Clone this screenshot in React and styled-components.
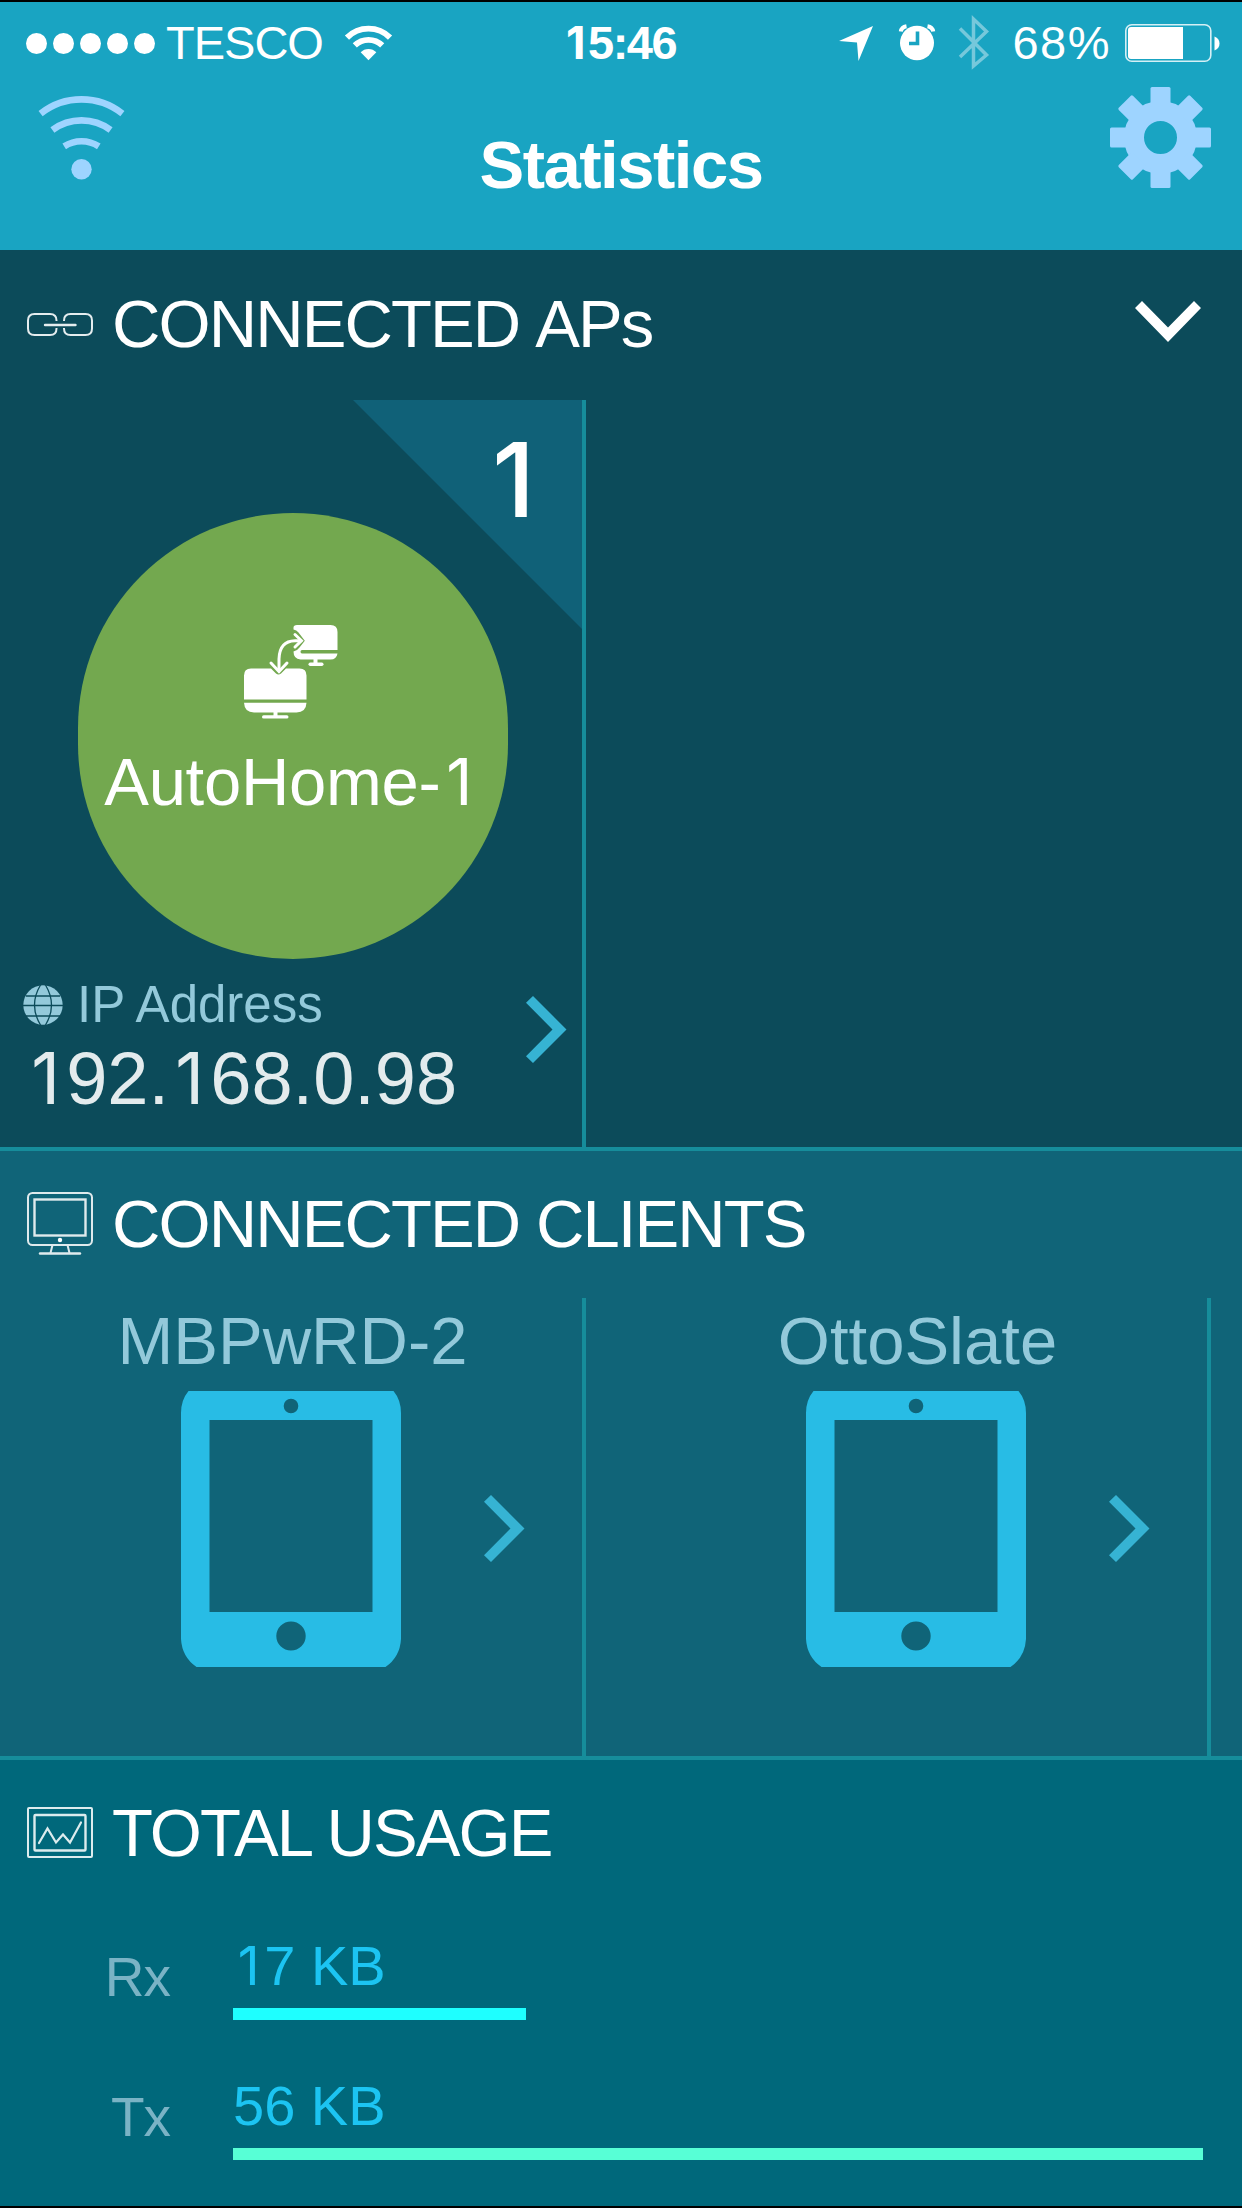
import React from "react";
import styled, { createGlobalStyle } from "styled-components";

const GlobalStyle = createGlobalStyle`
  body {
    margin: 0;
    background: #000000;
  }
  * {
    box-sizing: border-box;
  }
`

const Screen = styled.div`
  display: flex;
  flex-direction: column;
  width: 1242px;
  height: 2208px;
  border-top: 2px solid #000000;
  border-bottom: 2px solid #000000;
  overflow: hidden;
  color: #ffffff;
  font-family: "Liberation Sans", Arial, sans-serif;
  white-space: nowrap;
`

const Icon = styled.svg`
  display: block;
  flex: none;
  overflow: visible;
`

const Header = styled.header`
  height: 248px;
  background: #19a4c2;
`

const StatusBar = styled.div`
  display: grid;
  grid-template-columns: 1fr auto 1fr;
  align-items: center;
  height: 82px;
  padding: 0 22px 0 18px;
  font-size: 47px;
  line-height: 80px;
`

const StatusLeft = styled.div`
  display: flex;
  align-items: center;
  padding-left: 8px;
`

const StatusRight = styled.div`
  display: flex;
  align-items: center;
  justify-content: flex-end;
`

const Signal = styled.div`
  display: flex;
  gap: 6px;
  margin-right: 11px;
`

const Dot = styled.span`
  width: 21px;
  height: 21px;
  border-radius: 50%;
  background: #ffffff;
`

const Carrier = styled.span`
  margin-right: 22px;
  letter-spacing: -1px;
`

const Clock = styled.span`
  font-weight: 700;
  letter-spacing: -1.5px;
`

const Percent = styled.span`
  margin: 0 14px 0 23px;
  letter-spacing: 1.5px;
`

const NavBar = styled.div`
  display: grid;
  grid-template-columns: 1fr auto 1fr;
  align-items: start;
  padding: 3px 31px 0;
`

const NavButton = styled.button`
  justify-self: ${props => props.$end ? "end" : "start"};
  margin: ${props => props.$end ? "0" : "10px 0 0 8px"};
  padding: 0;
  border: 0;
  background: none;
  color: #9ed4ff;
  cursor: pointer;
`

const Title = styled.h1`
  margin: 38px 0 0;
  font-size: 67px;
  line-height: 80px;
  font-weight: 700;
  letter-spacing: -1.5px;
`

const Section = styled.section`
  height: ${props => props.$height}px;
  background: ${props => props.$color};
  border-bottom: ${props => props.$last ? "0" : "4px solid #168d9b"};
`

const SectionHeader = styled.div`
  display: flex;
  align-items: center;
  height: ${props => props.$height || 147}px;
  padding: 0 41px 2px 27px;
`

const SectionTitle = styled.h2`
  flex: 1;
  margin: 0 0 0 19px;
  font-size: 67px;
  line-height: 80px;
  font-weight: 400;
  letter-spacing: -1.9px;
  word-spacing: ${props => props.$gap || 0}px;
`

const Toggle = styled.button`
  margin-bottom: 6px;
  padding: 0;
  border: 0;
  background: none;
  color: #ffffff;
  cursor: pointer;
`

const Cards = styled.div`
  display: flex;
  gap: 39px;
  height: ${props => props.$height}px;
  overflow: hidden;
`

const Card = styled.div`
  position: relative;
  flex: none;
  width: 586px;
  border-right: 4px solid #168d9b;
`

const Corner = styled.div`
  position: absolute;
  top: 0;
  right: 0;
  width: 229px;
  height: 229px;
  padding-right: 47px;
  background: #106178;
  clip-path: polygon(0 0, 100% 0, 100% 100%);
  font-family: Inter, sans-serif;
  font-size: 103px;
  line-height: 159px;
  font-weight: 500;
  text-align: right;
`

const Circle = styled.div`
  position: relative;
  display: flex;
  flex-direction: column;
  align-items: center;
  width: 430px;
  height: 446px;
  margin: 113px 0 0 78px;
  padding: 112px 4px 0 0;
  border-radius: 215px;
  background: #73a84f;
`

const CircleName = styled.div`
  margin-top: 23px;
  font-size: 67px;
  line-height: 80px;
  letter-spacing: -0.3px;
`

const CardFooter = styled.div`
  display: flex;
  justify-content: space-between;
  align-items: flex-start;
  padding: 18px 15px 0 23px;
`

const IpLabel = styled.div`
  display: flex;
  align-items: center;
  gap: 14px;
  color: #93c9da;
  font-size: 51px;
  line-height: 56px;
`

const IpValue = styled.div`
  margin: 6px 0 0 2px;
  color: #e3ebed;
  font-size: 74px;
  line-height: 80px;
`

const OpenButton = styled.button`
  padding: 0;
  border: 0;
  background: none;
  color: #36b3d3;
  margin: ${props => props.$top || 0}px 0 ${props => props.$top ? 0 : 2}px;
  cursor: pointer;
`

const ClientName = styled.div`
  padding: 3px 0 0 3px;
  color: #93c9da;
  font-size: 67px;
  line-height: 80px;
  text-align: center;
`

const ClientBody = styled.div`
  display: flex;
  align-items: center;
  gap: 83px;
  padding: 10px 0 0 181px;
`

const Usage = styled.div`
  display: flex;
  flex-direction: column;
  gap: 56px;
  padding: 29px 39px 0 0;
  font-size: 56px;
  line-height: 60px;
`

const UsageRow = styled.div`
  display: grid;
  grid-template-columns: 170px 1fr;
  column-gap: 63px;
`

const UsageLabel = styled.div`
  padding-top: 11px;
  color: #7ab3c5;
  font-size: 55px;
  text-align: right;
  letter-spacing: -1px;
`

const UsageValue = styled.div`
  color: #1cc4f2;
`

const Bar = styled.div`
  height: 12px;
  margin-top: 12px;
  background: ${props => props.$color};
`

// plain "1" without the foot
const One = styled.span`
  display: inline-block;
  width: 0.58em;
  font-family: Inter, sans-serif;
  font-size: 0.96em;
  line-height: 1;
  text-align: center;
`

function Digits({ children }) {
  return children.split(/(1)/).map((part, i) => (
    part === "1" ? <One key={i}>1</One> : part
  ));
}

function StatusWifi() {
  return (
    <Icon width="47" height="36" viewBox="0 0 48 36">
      <g fill="none" stroke="#ffffff" strokeWidth="6">
        <path d="M2 12.5 A31 31 0 0 1 46 12.5" />
        <path d="M10 20.5 A20 20 0 0 1 38 20.5" />
      </g>
      <path d="M24 35.5 L16 27.5 A11 11 0 0 1 32 27.5 Z" fill="#ffffff" />
    </Icon>
  );
}

function WifiIcon() {
  return (
    <Icon width="85" height="83" viewBox="0 0 85 83">
      <g fill="none" stroke="currentColor" strokeWidth="6.6">
        <path d="M1.6 16.6 A66 66 0 0 1 83.4 16.6" />
        <path d="M13.4 33 A49 49 0 0 1 71.6 33" />
        <path d="M25.2 49.4 A32 32 0 0 1 59.8 49.4" />
      </g>
      <circle cx="42.5" cy="72.3" r="10.2" fill="currentColor" />
    </Icon>
  );
}

function GearIcon() {
  return (
    <Icon width="101" height="101" viewBox="-50.5 -50.5 101 101">
      <circle r="26.5" fill="none" stroke="currentColor" strokeWidth="20" />
      {[0, 45, 90, 135].map(angle => (
        <g key={angle} transform={`rotate(${angle})`} fill="currentColor">
          <rect x="-10" y="-50.5" width="20" height="20" rx="1.5" />
          <rect x="-10" y="30.5" width="20" height="20" rx="1.5" />
        </g>
      ))}
    </Icon>
  );
}

function StatusIcons() {
  return (
    <Icon width="150" height="56" viewBox="0 0 150 56">
      <path d="M34 11 L19.5 46 L18 27.5 L0 26 Z" fill="#ffffff" />
      <g>
        <ellipse cx="78" cy="28" rx="17" ry="17.3" fill="#ffffff" />
        <g fill="none" stroke="#ffffff" strokeWidth="4">
          <path d="M61.8 16.5 Q62.5 12 67.5 11.2" />
          <path d="M94.2 16.5 Q93.5 12 88.5 11.2" />
        </g>
        <path d="M78.5 16.5 V28.5 H70" fill="none" stroke="#19a4c2" strokeWidth="3.6" />
      </g>
      <path d="M121 13.5 L147.5 40 L134.5 51 V4 L147.5 16.5 L121 42" fill="none" stroke="#76c8db" strokeWidth="3.5" />
    </Icon>
  );
}

function BatteryIcon() {
  return (
    <Icon width="95" height="38" viewBox="0 0 95 38">
      <rect x="0.8" y="0.8" width="85" height="36.4" rx="6" fill="none" stroke="#d5eff5" strokeWidth="1.6" />
      <path d="M6 3 H58 V35 H6 Q3 35 3 32 V6 Q3 3 6 3 Z" fill="#ffffff" />
      <path d="M89.5 12.5 Q94.5 14.5 94.5 19.5 Q94.5 24.5 89.5 26.5 Z" fill="#ffffff" />
    </Icon>
  );
}

function LinkIcon() {
  return (
    <Icon width="66" height="23" viewBox="0 0 66 23">
      <g fill="none" stroke="#e5edef" strokeWidth="2">
        <path d="M29.5 8 V7.5 Q29.5 1 23 1 H7.5 Q1 1 1 7.5 V15.5 Q1 22 7.5 22 H23 Q29.5 22 29.5 15.5 V15" />
        <path d="M37 8 V7.5 Q37 1 43.5 1 H58.5 Q65 1 65 7.5 V15.5 Q65 22 58.5 22 H43.5 Q37 22 37 15.5 V15" />
        <path d="M18 12 H48.5" strokeWidth="2.4" strokeLinecap="round" />
      </g>
    </Icon>
  );
}

function MonitorIcon() {
  return (
    <Icon width="66" height="63" viewBox="0 0 66 63">
      <g fill="none" stroke="#dfeaed" strokeWidth="2">
        <rect x="1" y="1" width="64" height="52" rx="4.5" />
        <rect x="7.5" y="7.5" width="51" height="36" strokeWidth="2.4" />
        <path d="M25.5 53 L23.5 61 M40.5 53 L42.5 61" />
        <path d="M13 61.5 H53" strokeWidth="2.4" strokeLinecap="round" />
      </g>
      <circle cx="33" cy="48" r="2.2" fill="#ffffff" />
    </Icon>
  );
}

function ChartIcon() {
  return (
    <Icon width="66" height="51" viewBox="0 0 66 51">
      <g fill="none" stroke="#dcecee" strokeWidth="2">
        <rect x="1" y="1" width="64" height="49" rx="1" />
        <rect x="7.5" y="8" width="51" height="35.5" rx="1" strokeWidth="2.4" />
        <path d="M12 36 L20.5 21.5 L29 35.5 L36 27.5 L43 35.5 L54 15.5" strokeWidth="2.2" strokeLinecap="round" />
      </g>
    </Icon>
  );
}

function SyncIcon() {
  return (
    <Icon width="94" height="94" viewBox="0 0 94 94">
      <g fill="#ffffff">
        <path d="M49.5 4.5 V2.500 Q49.5 0 53 0 H86.5 Q93.500 0 93.5 7 V25 H58 Q56.5 25 56.5 26.7 Q56.5 28.400 58 28.4 H93.5 Q92.5 34.5 86.5 34.5 H56.5 Q49.5 34 49.5 26.5 Q53.500 25.500 55.5 22.500 L60.8 15.7 L54.5 7.500 Q52.500 5 49.5 4.5 Z" />
        <rect x="69.5" y="34" width="4" height="5" />
        <rect x="64.5" y="37.5" width="15" height="3.5" rx="1.700" />
        <path d="M0 74.5 V50.5 Q0 43.5 7 43.5 H27 L32 48.5 Q34.5 50.500 37 48.5 L42 43.5 H55.5 Q62.5 43.5 62.5 50.5 V74.5 Z" />
        <path d="M0 77.800 H62.5 Q62 87.5 52.5 87.5 H10 Q0.500 87.5 0 77.800 Z" />
        <rect x="29.5" y="87" width="4" height="5" />
        <rect x="18" y="90.2" width="26.5" height="3.400" rx="1.700" />
      </g>
      <path d="M35 46 V34 Q35.500 16 51 15.7 H57" fill="none" stroke="#ffffff" strokeWidth="3" />
      <path d="M27 38 L35 46.500 L43 38 M51 9.500 L57.5 15.7 L51 22" fill="none" stroke="#ffffff" strokeWidth="3" strokeLinecap="round" />
    </Icon>
  );
}

function GlobeIcon() {
  return (
    <Icon width="40" height="40" viewBox="0 0 40 40">
      <circle cx="20" cy="20" r="19.7" fill="currentColor" />
      <g fill="none" stroke="#0c4b5a" strokeWidth="1.3">
        <path d="M0 20.500 H40 M3 11 H37 M3 31 H37" />
        <path d="M17.500 0 Q5.500 20 17.500 40 M22.500 0 Q34.500 20 22.500 40" />
      </g>
    </Icon>
  );
}

function Chevron() {
  return (
    <Icon width="41" height="67" viewBox="0 0 41 67">
      <path d="M7 0 L40.5 33.5 L7 67 L0 60.3 L26.5 33.5 L0 6.7 Z" fill="currentColor" />
    </Icon>
  );
}

function ChevronDown() {
  return (
    <Icon width="66" height="41" viewBox="0 0 66 41">
      <path d="M0 7 L7 0 L33 26.5 L59 0 L66 7 L33 41 Z" fill="currentColor" />
    </Icon>
  );
}

function TabletIcon() {
  return (
    <Icon width="220" height="276" viewBox="0 0 220 276">
      <path
        fill="#28bce5"
        fillRule="evenodd"
        d="M7.5 0 H212.5 Q220 9 220 22 V248 Q219 266 204.5 276 H15.5 Q1 266 0 248 V22 Q0 9 7.5 0 Z
          M28.5 29 V221 H191.5 V29 Z
          M117.3 15 A7.3 7.3 0 1 0 102.7 15 A7.3 7.3 0 1 0 117.3 15 Z
          M124.7 245 A14.7 14.5 0 1 0 95.3 245 A14.7 14.5 0 1 0 124.7 245 Z"
      />
    </Icon>
  );
}

const clients = ["MBPwRD-2", "OttoSlate"];

const usage = [
  { label: "Rx", value: "17 KB", share: 30.2, color: "#1effff" },
  { label: "Tx", value: "56 KB", share: 100, color: "#57ffd6" },
];

export default function App() {
  return (
    <Screen>
      <GlobalStyle />
      <Header>
        <StatusBar>
          <StatusLeft>
            <Signal>
              {[0, 1, 2, 3, 4].map(i => <Dot key={i} />)}
            </Signal>
            <Carrier>TESCO</Carrier>
            <StatusWifi />
          </StatusLeft>
          <Clock><Digits>15:46</Digits></Clock>
          <StatusRight>
            <StatusIcons />
            <Percent>68%</Percent>
            <BatteryIcon />
          </StatusRight>
        </StatusBar>
        <NavBar>
          <NavButton aria-label="Wi-Fi"><WifiIcon /></NavButton>
          <Title>Statistics</Title>
          <NavButton $end aria-label="Settings"><GearIcon /></NavButton>
        </NavBar>
      </Header>

      <Section $height={901} $color="#0c4b5a">
        <SectionHeader $height={150}>
          <LinkIcon />
          <SectionTitle $gap={3}>CONNECTED APs</SectionTitle>
          <Toggle aria-label="Collapse"><ChevronDown /></Toggle>
        </SectionHeader>
        <Cards $height={747}>
          <Card>
            <Corner>1</Corner>
            <Circle>
              <SyncIcon />
              <CircleName><Digits>AutoHome-1</Digits></CircleName>
            </Circle>
            <CardFooter>
              <div>
                <IpLabel><GlobeIcon />IP Address</IpLabel>
                <IpValue><Digits>192.168.0.98</Digits></IpValue>
              </div>
              <OpenButton $top={19} aria-label="Open"><Chevron /></OpenButton>
            </CardFooter>
          </Card>
        </Cards>
      </Section>

      <Section $height={609} $color="#106478">
        <SectionHeader>
          <MonitorIcon />
          <SectionTitle>CONNECTED CLIENTS</SectionTitle>
        </SectionHeader>
        <Cards $height={458}>
          {clients.map(name => (
            <Card key={name}>
              <ClientName>{name}</ClientName>
              <ClientBody>
                <TabletIcon />
                <OpenButton aria-label="Open"><Chevron /></OpenButton>
              </ClientBody>
            </Card>
          ))}
        </Cards>
      </Section>

      <Section $height={446} $color="#00687b" $last>
        <SectionHeader>
          <ChartIcon />
          <SectionTitle>TOTAL USAGE</SectionTitle>
        </SectionHeader>
        <Usage>
          {usage.map(row => (
            <UsageRow key={row.label}>
              <UsageLabel>{row.label}</UsageLabel>
              <div>
                <UsageValue><Digits>{row.value}</Digits></UsageValue>
                <Bar $color={row.color} style={{ width: `${row.share}%` }} />
              </div>
            </UsageRow>
          ))}
        </Usage>
      </Section>
    </Screen>
  );
}
